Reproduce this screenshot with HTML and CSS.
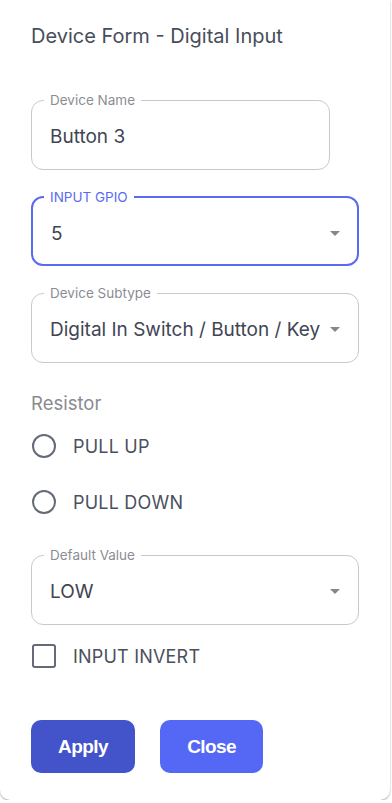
FILE: index.html
```html
<!DOCTYPE html>
<html>
<head>
    <title>Device Form</title>
    <link rel="stylesheet" href="styles.css">
</head>
<body>
    <div class="card">
        <h1 class="title">Device Form - Digital Input</h1>

        <fieldset class="field short">
            <legend>Device Name</legend>
            <div class="value">Button 3</div>
        </fieldset>

        <fieldset class="field focused">
            <legend>INPUT GPIO</legend>
            <div class="value">5<span class="arrow"></span></div>
        </fieldset>

        <fieldset class="field">
            <legend>Device Subtype</legend>
            <div class="value">Digital In Switch / Button / Key<span class="arrow"></span></div>
        </fieldset>

        <div class="group-label">Resistor</div>
        <label class="check-row"><span class="radio"></span>PULL UP</label>
        <label class="check-row"><span class="radio"></span>PULL DOWN</label>

        <fieldset class="field default">
            <legend>Default Value</legend>
            <div class="value">LOW<span class="arrow"></span></div>
        </fieldset>

        <label class="check-row invert"><span class="box"></span>INPUT INVERT</label>

        <div class="actions">
            <button class="btn apply">Apply</button>
            <button class="btn close">Close</button>
        </div>
    </div>
</body>
</html>
```

FILE: styles.css
```css
/* page */
body{
    margin: 0;
    background-color: #fff;
    font-family: Inter, "Noto Sans", sans-serif;
}
.card{
    width: 390px;
    height: 800px;
    box-sizing: border-box;
    padding: 24px 31px 0;
    background-color: #fff;
    border-radius: 0 0 10px 10px;
    box-shadow: 0 1px 2px rgba(0, 0, 0, 0.35);
}
.title{
    margin: 0 0 45px;
    font-size: 20px;
    line-height: 24px;
    font-weight: 400;
    color: #474d5b;
}

/* outlined fields */
.field{
    margin: 0;
    padding: 0 12px 4px;
    min-inline-size: 0;
    border: 1px solid #c9c9cc;
    border-radius: 12px;
}
.field legend{
    padding: 0 6px;
    font-size: 13.5px;
    line-height: 14px;
    color: #8c8d93;
}
.field + .field{
    margin-top: 20px;
}
.field.short{
    width: 299px;
    box-sizing: border-box;
}
.field.focused{
    border: 2px solid #5b6bf0;
    padding: 0 11px 2px;
}
.field.focused legend{
    color: #5b6bf0;
}
.field.focused .value{
    padding-left: 7px;
}
.value{
    height: 58px;
    display: flex;
    align-items: center;
    padding-left: 6px;
    font-size: 19px;
    color: #3f4553;
    white-space: nowrap;
}
.arrow{
    margin-left: auto;
    margin-right: 6px;
    width: 0;
    height: 0;
    border-left: 5px solid transparent;
    border-right: 5px solid transparent;
    border-top: 5px solid #85878d;
}

/* radios and checkbox */
.group-label{
    margin-top: 28px;
    margin-bottom: 3px;
    font-size: 18.5px;
    line-height: 24px;
    color: #8a8b90;
}
.check-row{
    height: 56px;
    display: flex;
    align-items: center;
    font-size: 18px;
    color: #4a505d;
    letter-spacing: 0.2px;
}
.radio,
.box{
    width: 24px;
    height: 24px;
    box-sizing: border-box;
    margin-left: 1px;
    margin-right: 17px;
    border: 2px solid #646a77;
    border-radius: 50%;
    flex-shrink: 0;
}
.box{
    border-radius: 3px;
}
.field.default{
    margin-top: 18px;
}
.check-row.invert{
    height: 42px;
    margin-top: 10px;
}

/* buttons */
.actions{
    display: flex;
    gap: 25px;
    margin-top: 43px;
}
.btn{
    height: 53px;
    border: none;
    border-radius: 10px;
    font-family: "Liberation Sans", Arial, sans-serif;
    font-size: 19px;
    font-weight: bold;
    letter-spacing: -0.6px;
    color: #fff;
    cursor: pointer;
}
.btn.apply{
    width: 104px;
    background-color: #4353c9;
}
.btn.close{
    width: 103px;
    background-color: #5568f5;
}
```
